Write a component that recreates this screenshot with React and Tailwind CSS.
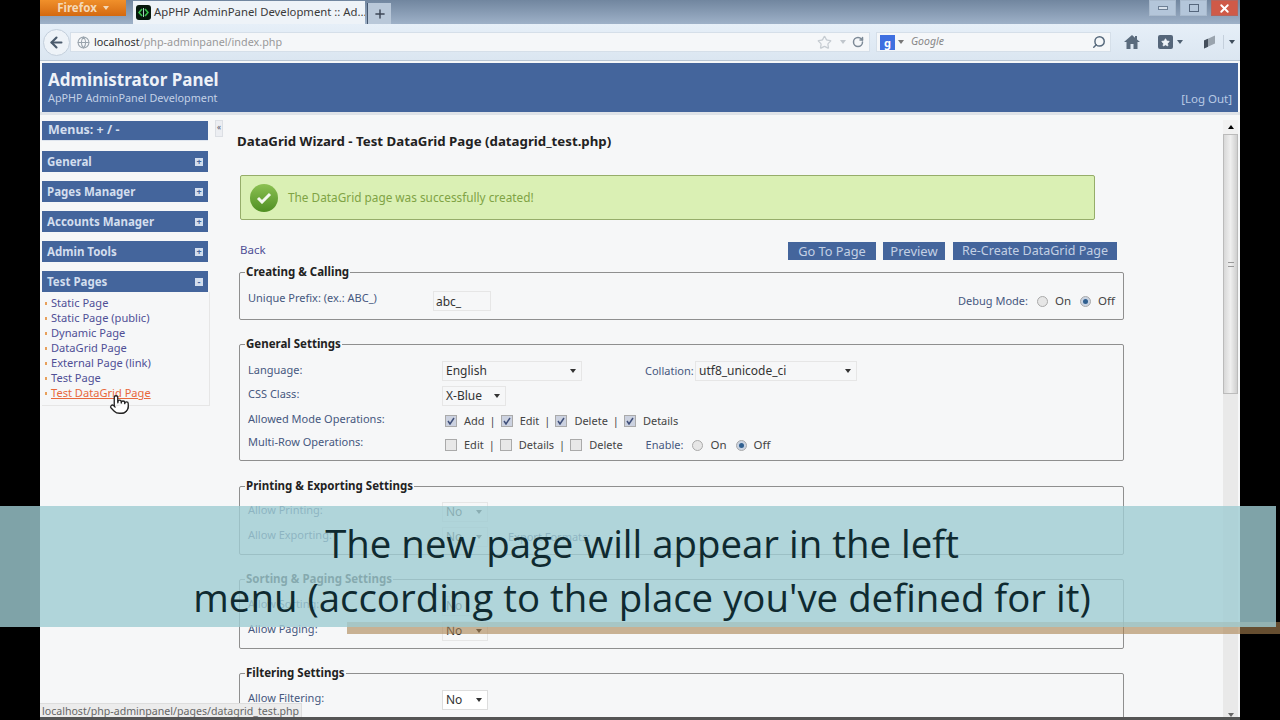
import React from 'react';
import { ArrowLeft, Search, RotateCw, Star, Pointer, Plus, Globe, X } from 'lucide-react';

const menuGroups = ['General', 'Pages Manager', 'Accounts Manager', 'Admin Tools'];
const testPages = ['Static Page', 'Static Page (public)', 'Dynamic Page', 'DataGrid Page', 'External Page (link)', 'Test Page'];

const Caret = ({ className = 'border-t-[#333]' }) => (
    <span className={`w-0 h-0 border-x-[3px] border-x-transparent border-t-[4px] ${className}`} />
);

const Select = ({ children, width, bright }) => (
    <div className={`flex items-center justify-between h-[20px] pl-[3px] pr-[5px] text-[12px] text-[#333] border ${bright ? 'border-[#ddd] bg-white' : 'border-[#e6e6e6]'} ${width}`}>
        <span>{children}</span>
        <Caret />
    </div>
);

const Check = ({ checked }) => (
    <span className={`w-[12px] h-[12px] border border-[#aaa] flex items-center justify-center ${checked ? 'bg-[#ccd2e0]' : 'bg-[#e8e8e8]'}`}>
        {checked && (
            <svg width="8" height="8" viewBox="0 0 8 8">
                <path d="M1 4l2 3 4-6" fill="none" stroke="#3f4f7a" strokeWidth="1.5" />
            </svg>
        )}
    </span>
);

const Radio = ({ checked }) => (
    <span className={`w-[11px] h-[11px] rounded-full border border-[#aaa] flex items-center justify-center ${checked ? 'bg-[#c9d3e2]' : 'bg-[#e6e6e6]'}`}>
        {checked && <span className="w-[5px] h-[5px] rounded-full bg-[#2f5f8f]" />}
    </span>
);

const Label = ({ children, className = 'w-[194px] -mt-[4px]' }) => (
    <span className={`text-[11px] text-[#46587f] shrink-0 ${className}`}>{children}</span>
);

const Group = ({ title, height, children, className = '' }) => (
    <fieldset className={`border border-[#8f8f8f] rounded-[2px] ml-[2px] w-[885px] px-[8px] ${height} ${className}`}>
        <legend className="ml-[-3px] px-[1px] h-[16px] leading-[16px] text-[11.5px] font-bold text-[#222]">{title}</legend>
        {children}
    </fieldset>
);

const Option = ({ checked, children }) => (
    <span className="flex items-center gap-[7px] text-[11px] text-[#444]">
        <Check checked={checked} />
        {children}
    </span>
);

const Row = ({ children, className = '' }) => (
    <div className={`flex items-center h-[24px] ${className}`}>{children}</div>
);

const OnOff = () => (
    <span className="flex items-center text-[11.5px] text-[#444]">
        <Radio />
        <span className="ml-[7px] mr-[9px]">On</span>
        <Radio checked />
        <span className="ml-[7px]">Off</span>
    </span>
);

const WinButton = ({ children, className }) => (
    <div className={`h-[16px] flex items-center justify-center border border-[#a9bacd] ${className}`}>{children}</div>
);

const Browser = () => (
    <>
        {/* Tab strip */}
        <div className="h-[24px] shrink-0 flex bg-gradient-to-b from-[#71869f] to-[#9eb1c8]">
            <div className="w-[86px] h-[16px] bg-gradient-to-b from-[#f0902a] to-[#d4690f] flex items-center justify-center gap-[6px] text-[11.5px] font-bold text-[#f4d9b8]">
                Firefox
                <Caret className="border-t-[#f4d9b8]" />
            </div>
            <div className="ml-[7px] mt-[1px] w-[232px] h-[23px] bg-[#eef3f8] flex items-center pl-[3px] text-[11.3px] text-[#3a3a3a] whitespace-nowrap overflow-hidden">
                <span className="w-[15px] h-[15px] mr-[3px] rounded-[3px] bg-[#06170c] flex items-center justify-center shrink-0">
                    <svg width="11" height="11" viewBox="0 0 11 11">
                        <path d="M4 2L1 5.500L4 9M7 2l3 3.500L7 9" fill="none" stroke="#38c24b" strokeWidth="1.600" />
                        <path d="M5.500 1v9" stroke="#cfe" strokeWidth="0.800" />
                    </svg>
                </span>
                ApPHP AdminPanel Development :: Ad...
            </div>
            <div className="ml-[2px] mt-[3px] w-[24px] h-[21px] bg-[#b9c8d9] flex items-center justify-center border-l border-[#44566e]">
                <Plus size={14} strokeWidth={2.5} className="text-[#3c4656]" />
            </div>
            <div className="ml-auto flex gap-[4px] pr-[2px]">
                <WinButton className="w-[27px] bg-[#b4c6da]">
                    <span className="w-[10px] h-[4px] bg-[#d8e2ed] border border-[#6d7f95]" />
                </WinButton>
                <WinButton className="w-[27px] bg-[#b4c6da]">
                    <span className="w-[10px] h-[8px] border border-[#55667c]" />
                </WinButton>
                <WinButton className="w-[27px] bg-[#cf5a48] border-[#b5645c]">
                    <X size={13} className="text-white" strokeWidth={3.5} />
                </WinButton>
            </div>
        </div>

        {/* Navigation toolbar */}
        <div className="h-[37px] shrink-0 flex items-center bg-gradient-to-b from-[#e6eff8] to-[#dbe6f1] border-b border-[#b9c6d4] pl-[3px] pr-[3px]">
            <div className="w-[27px] h-[27px] rounded-full bg-[#eef3f8] border border-[#c3cfdc] flex items-center justify-center shrink-0">
                <ArrowLeft size={17} strokeWidth={3} className="text-[#4a5a6c]" />
            </div>
            <div className="w-[800px] h-[20px] bg-[#f5f7f9] border border-[#d5dfe9] flex items-center pl-[6px] pr-[5px] text-[10.8px]">
                <Globe size={13} className="text-[#9aa4ad] mr-[4px]" />
                <span className="text-[#333]">localhost</span>
                <span className="text-[#999]">/php-adminpanel/index.php</span>
                <Star size={15} className="ml-auto mr-[2px] text-[#c6ccd2]" />
                <Caret className="ml-[6px] border-t-[#c0c6cc]" />
                <RotateCw size={12} strokeWidth={3} className="ml-[6px] text-[#7d8a97]" />
            </div>
            <div className="ml-[6px] w-[235px] h-[20px] bg-[#f5f7f9] border border-[#d5dfe9] flex items-center pl-[3px] pr-[4px] text-[10.5px] italic text-[#888]">
                <span className="w-[15px] h-[15px] bg-[#3f6fe0] text-white text-[11px] not-italic font-bold leading-[15px] text-center">g</span>
                <Caret className="ml-[3px] mr-[7px] border-t-[#777]" />
                Google
                <Search size={14} strokeWidth={2.5} className="ml-auto text-[#56697c] -scale-x-100" />
            </div>
            <svg width="16" height="14" viewBox="0 0 16 14" className="ml-[13px]">
                <path d="M8 0L0 7h2.500v7h4V9h3v5h4V7H16L13 4.400V1h-2v1.700z" fill="#5a6b7d" />
            </svg>
            <span className="ml-[18px] w-[15px] h-[14px] rounded-[2px] bg-[#55667a] flex items-center justify-center">
                <Star size={9} fill="#eef3f8" className="text-[#eef3f8]" />
            </span>
            <Caret className="ml-[4px] border-t-[#4f6072]" />
            <span className="ml-[21px] w-[11px] h-[8px] -skew-y-[25deg] bg-[#9aa4ae] border-l-[4px] border-[#444f5c]" />
            <span className="ml-[8px] h-[14px] border-l border-[#c5d0dc]" />
            <Caret className="ml-[5px] border-t-[#3f4d5c]" />
        </div>
    </>
);

const Sidebar = () => (
    <aside className="w-[170px] shrink-0 pl-[2px] pt-[6px]">
        <div className="h-[20px] w-[166px] mb-[10px] bg-[#44659c] pl-[6px] flex items-center text-[12.5px] font-bold text-[#d3deee] border-b border-[#dfe5ee]">
            Menus: + / -
        </div>
        {menuGroups.map((name) => (
            <div key={name} className="h-[21px] w-[166px] mb-[9px] bg-[#44659c] pt-px pl-[5px] pr-[5px] flex items-center justify-between text-[11.5px] font-bold text-[#d3deee]">
                {name}
                <span className="w-[8px] h-[8px] bg-[#d3deee] text-[#44659c] text-[9px] leading-[8px] text-center font-bold">+</span>
            </div>
        ))}
        <div className="h-[21px] w-[166px] mt-[1px] bg-[#44659c] pt-px pl-[5px] pr-[5px] flex items-center justify-between text-[11.5px] font-bold text-[#d3deee]">
            Test Pages
            <span className="w-[8px] h-[8px] bg-[#d3deee] text-[#44659c] text-[9px] leading-[8px] text-center font-bold">-</span>
        </div>
        <ul className="w-[168px] pt-[4px] pb-[4px] pl-[3px] border-r border-b border-[#e6e6e6]">
            {testPages.map((name) => (
                <li key={name} className="h-[15px] flex items-center text-[11.1px] text-[#4f4f96]">
                    <span className="w-[2px] h-[3px] bg-[#e8a15c] mr-[4px]" />
                    {name}
                </li>
            ))}
            <li className="h-[15px] flex items-center text-[11.1px] text-[#e8683c] underline">
                <span className="w-[2px] h-[3px] bg-[#e8a15c] mr-[4px]" />
                Test DataGrid Page
            </li>
        </ul>
    </aside>
);

const Main = () => (
    <main className="w-[988px] shrink-0 pl-[1px] overflow-hidden">
        <h1 className="mt-[17px] h-[18px] leading-[18px] text-[13.25px] font-bold text-[#222]">DataGrid Wizard - Test DataGrid Page (datagrid_test.php)</h1>

        <div className="mt-[25px] ml-[3px] w-[855px] h-[45px] flex items-center bg-[#daf0b4] border border-[#96ad6a] rounded-[2px] pl-[9px]">
            <span className="w-[28px] h-[28px] rounded-full bg-gradient-to-b from-[#8cc152] to-[#4f8f22] flex items-center justify-center shrink-0">
                <svg width="16" height="12" viewBox="0 0 16 12">
                    <path d="M2 6l4 4 8-8" fill="none" stroke="#f4f8ee" strokeWidth="3" />
                </svg>
            </span>
            <span className="ml-[10px] text-[11.8px] text-[#7fa344]">The DataGrid page was successfully created!</span>
        </div>

        <div className="mt-[22px] ml-[3px] w-[877px] h-[22px] flex items-start justify-between">
            <span className="text-[11.5px] text-[#4f4f96] leading-[16px]">Back</span>
            <div className="flex gap-[7px]">
                <span className="w-[88px] h-[18px] bg-[#44659c] text-[#c3d0e4] text-[12.8px] leading-[18px] text-center">Go To Page</span>
                <span className="w-[62px] h-[18px] bg-[#44659c] text-[#c3d0e4] text-[13px] leading-[18px] text-center">Preview</span>
                <span className="w-[164px] h-[18px] ml-px bg-[#44659c] text-[#c3d0e4] text-[12.5px] leading-[18px] text-center">Re-Create DataGrid Page</span>
            </div>
        </div>

        <Group title="Creating & Calling" height="h-[56px]">
            <Row className="mt-[9px] justify-between">
                <span className="flex items-center">
                    <Label className="w-[194px] -mt-[5px] text-[11.5px]">Unique Prefix: (ex.: ABC_)</Label>
                    <span className="-ml-[9px] w-[58px] h-[20px] pl-[2px] leading-[20px] border border-[#e6e6e6] text-[12px] text-[#333]">abc_</span>
                </span>
                <span className="flex items-center">
                    <Label className="mr-[9px]">Debug Mode:</Label>
                    <OnOff />
                </span>
            </Row>
        </Group>

        <Group title="General Settings" height="h-[125px]" className="mt-[16px]">
            <Row className="mt-[7px]">
                <Label className="w-[194px] -mt-[2px]">Language:</Label>
                <Select width="w-[140px]">English</Select>
                <Label className="ml-[63px] w-[50px]">Collation:</Label>
                <Select width="w-[162px]">utf8_unicode_ci</Select>
            </Row>
            <Row className="mt-[1px]">
                <Label>CSS Class:</Label>
                <Select width="w-[64px]">X-Blue</Select>
            </Row>
            <Row className="mt-[1px]">
                <Label>Allowed Mode Operations:</Label>
                <span className="flex items-center gap-[5px] ml-[3px] text-[11px] text-[#444]">
                    <Option checked>Add</Option> |
                    <Option checked>Edit</Option> |
                    <Option checked>Delete</Option> |
                    <Option checked>Details</Option>
                </span>
            </Row>
            <Row>
                <Label className="w-[194px] -mt-[6px]">Multi-Row Operations:</Label>
                <span className="flex items-center gap-[5px] ml-[3px] text-[11px] text-[#444]">
                    <Option>Edit</Option> |
                    <Option>Details</Option> |
                    <Option>Delete</Option>
                </span>
                <Label className="ml-[23px] mr-[9px]">Enable:</Label>
                <OnOff />
            </Row>
        </Group>

        <Group title="Printing & Exporting Settings" height="h-[77px]" className="mt-[17px]">
            <Row className="mt-[6px]">
                <Label>Allow Printing:</Label>
                <Select width="w-[46px]">No</Select>
            </Row>
            <Row className="mt-[1px]">
                <Label>Allow Exporting:</Label>
                <Select width="w-[46px]">No</Select>
                <Label className="ml-[20px]">Export Formats:</Label>
            </Row>
        </Group>

        <Group title="Sorting & Paging Settings" height="h-[78px]" className="mt-[16px]">
            <Row className="mt-[7px]">
                <Label>Allow Sorting:</Label>
                <Select width="w-[46px]">No</Select>
            </Row>
            <Row className="mt-[1px]">
                <Label>Allow Paging:</Label>
                <Select width="w-[46px]">No</Select>
            </Row>
        </Group>

        <Group title="Filtering Settings" height="h-[90px]" className="mt-[16px]">
            <Row className="mt-[7px]">
                <Label>Allow Filtering:</Label>
                <Select width="w-[46px]" bright>No</Select>
            </Row>
        </Group>
    </main>
);

const App = () => {
    return (
        <div className="relative w-[1280px] h-[720px] bg-black overflow-hidden font-['Noto_Sans',sans-serif]">
            <div className="flex flex-col w-[1200px] h-[720px] ml-[40px] bg-[#f6f7f8] overflow-hidden">
                <Browser />

                {/* Page header */}
                <header className="h-[49px] mt-[2px] shrink-0 mx-[2px] bg-[#44659c] flex justify-between items-end px-[6px] pb-[8px]">
                    <div className="flex flex-col">
                        <span className="text-[17px] font-bold leading-[22px] text-[#eef2f8]">Administrator Panel</span>
                        <span className="text-[10.8px] leading-[13px] text-[#c3d1e6]">ApPHP AdminPanel Development</span>
                    </div>
                    <span className="text-[11.5px] text-[#b9cae5] leading-[15px] -mb-[2px]">[Log Out]</span>
                </header>
                <div className="h-[3px] shrink-0 bg-[#dfe3e8]" />

                {/* Page body */}
                <div className="flex flex-1 min-h-0">
                    <Sidebar />
                    <div className="w-[8px] h-[17px] mt-[5px] ml-[5px] mr-[13px] shrink-0 bg-[#eceef2] border border-[#dcdfe4] text-[8px] leading-[12px] text-center text-[#556]">«</div>
                    <Main />
                    <div className="w-[15px] shrink-0 -ml-[1px] mt-[5px] flex flex-col bg-[#e9e9e9]">
                        <span className="h-[14px] flex items-center justify-center bg-[#f1f1f1]"><Caret className="rotate-180" /></span>
                        <span className="h-[260px] bg-gradient-to-r from-[#d8d8d8] via-[#efefef] to-[#cfcfcf] border border-[#bbb] flex items-center justify-center">
                            <span className="w-[6px] h-[5px] border-y border-[#999]" />
                        </span>
                        <span className="mt-auto mb-[3px] flex justify-center"><Caret className="border-t-[#666]" /></span>
                    </div>
                </div>

                {/* Status tooltip */}
                <div className="absolute left-[40px] top-[703px] w-[262px] h-[14px] pl-[2px] bg-[#ececec] border-t border-r border-[#ddd] text-[10.6px] leading-[14px] text-[#666] whitespace-nowrap">
                    localhost/php-adminpanel/pages/datagrid_test.php
                </div>
                <div className="absolute left-[40px] top-[717px] w-[1200px] h-[3px] bg-[#555]" />
            </div>

            {/* Mouse cursor over the link */}
            <Pointer size={21} fill="#ffffff" strokeWidth={1.5} className="absolute left-[109px] top-[394px] text-[#222]" />

            {/* Video caption */}
            <div className="absolute left-[347px] top-[622px] w-[933px] h-[12px] bg-[#aa8250]/60" />
            <div className="absolute left-0 top-[506px] w-[1276px] h-[121px] bg-[#9fccd2]/80 pt-[10px] pl-[8px] text-center font-['Open_Sans',sans-serif] text-[38.4px] leading-[54px] text-[#0f2a30]">
                The new page will appear in the left
                <br />
                menu (according to the place you've defined for it)
            </div>
        </div>
    );
};

export default App;
